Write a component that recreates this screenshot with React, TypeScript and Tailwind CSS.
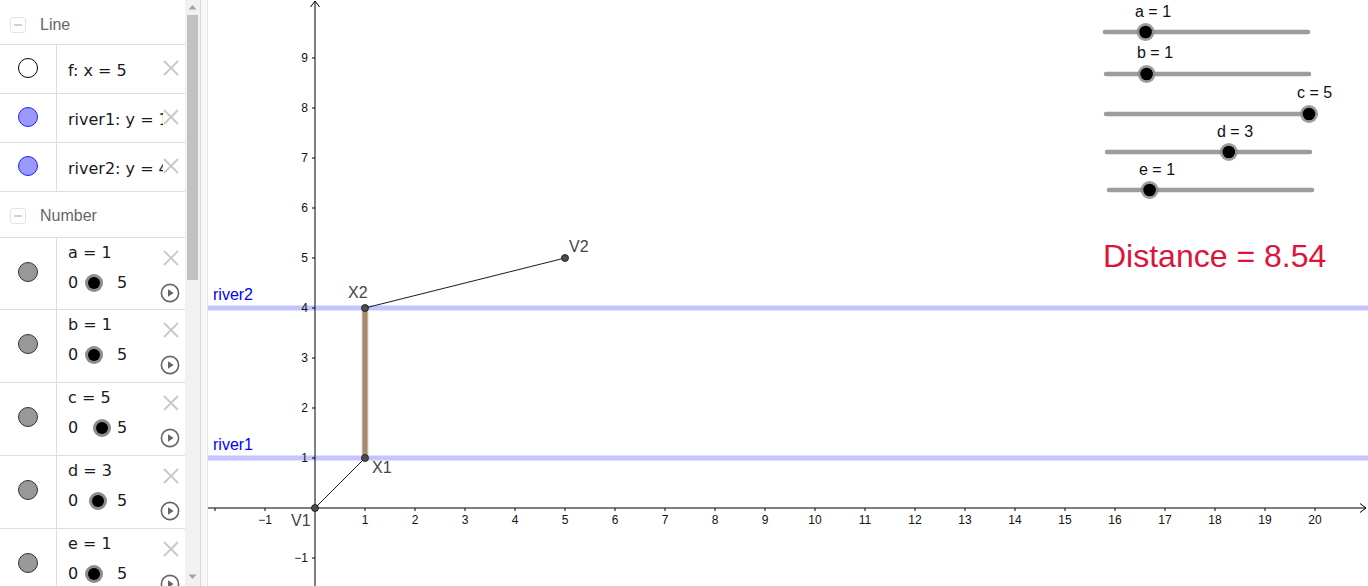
import React from "react";

const DEJAVU = { fontFamily: '"DejaVu Sans", sans-serif' } as const;

function XIcon() {
  return (
    <svg width="16" height="16" viewBox="0 0 16 16">
      <path d="M1 1 L15 15 M15 1 L1 15" stroke="#c8c8c8" strokeWidth="1.8" fill="none" />
    </svg>
  );
}

function PlayIcon() {
  return (
    <svg width="20" height="20" viewBox="0 0 20 20">
      <circle cx="10" cy="10" r="8.6" fill="white" stroke="#666" strokeWidth="1.6" />
      <path d="M8 6.2 L13.6 10 L8 13.8 Z" fill="#666" />
    </svg>
  );
}

function Knob({ size = 18 }: { size?: number }) {
  return (
    <div
      className="flex items-center justify-center rounded-full bg-[#8c8c8c]"
      style={{ width: size, height: size }}
    >
      <div className="h-[12px] w-[12px] rounded-full bg-black" />
    </div>
  );
}

function MinusBox() {
  return (
    <div className="flex h-[16px] w-[16px] items-center justify-center rounded-[3px] border border-[#e3e3e3]">
      <div className="h-[2px] w-[8px] bg-[#d0d0d0]" />
    </div>
  );
}

type LineItem = { label: string; fill: string; stroke: string };
const lines: LineItem[] = [
  { label: "f: x = 5", fill: "#ffffff", stroke: "#000000" },
  { label: "river1: y = 1", fill: "#9999ff", stroke: "#2020ff" },
  { label: "river2: y = 4", fill: "#9999ff", stroke: "#2020ff" },
];

const numbers = [
  { name: "a", value: 1, h: 72 },
  { name: "b", value: 1, h: 73 },
  { name: "c", value: 5, h: 73 },
  { name: "d", value: 3, h: 73 },
  { name: "e", value: 1, h: 73 },
];

function GroupHeader({ title, h, pt }: { title: string; h: number; pt: number }) {
  return (
    <div className="flex items-center gap-[14px] pl-[10px]" style={{ height: h, paddingTop: pt }}>
      <MinusBox />
      <span className="text-[16px] text-[#666666]" style={{ fontFamily: '"Liberation Sans", Arial, sans-serif' }}>
        {title}
      </span>
    </div>
  );
}

function AlgebraPanel() {
  return (
    <div className="flex h-full w-[200px] shrink-0">
      <div className="h-full w-[185px] overflow-hidden bg-white">
        <GroupHeader title="Line" h={44} pt={5} />
        {lines.map((l) => (
          <div key={l.label} className="flex h-[49px] border-t border-[#dddddd]">
            <div className="flex w-[57px] items-center justify-center border-r border-[#dddddd] pb-[3px]">
              <div
                className="h-[20px] w-[20px] rounded-full border"
                style={{ backgroundColor: l.fill, borderColor: l.stroke }}
              />
            </div>
            <div className="relative flex-1">
              <div className="absolute left-[11px] top-[16px] w-[95px] overflow-hidden whitespace-nowrap text-[16px] leading-[20px] text-[#1a1a1a]" style={DEJAVU}>
                {l.label}
              </div>
              <div className="absolute right-[6px] top-[15px]">
                <XIcon />
              </div>
            </div>
          </div>
        ))}
        <div className="border-t border-[#dddddd]">
          <GroupHeader title="Number" h={45} pt={3} />
        </div>
        {numbers.map((n) => (
          <div key={n.name} className="flex border-t border-[#dddddd]" style={{ height: n.h }}>
            <div className="flex w-[57px] items-center justify-center border-r border-[#dddddd] pb-[4px]">
              <div className="h-[20px] w-[20px] rounded-full border border-[#333333] bg-[#999999]" />
            </div>
            <div className="relative flex-1 pl-[11px] text-[16px] text-[#1a1a1a]" style={DEJAVU}>
              <div className="mt-[5px] h-[20px] leading-[20px]">
                {n.name} = {n.value}
              </div>
              <div className="mt-[10px] flex h-[20px] items-center leading-[20px]">
                <span className="w-[11px]">0</span>
                <div className="relative h-[20px] w-[38px]">
                  <div className="absolute top-[1px]" style={{ left: 4.2 + n.value * 1.93 }}>
                    <Knob />
                  </div>
                </div>
                <span>5</span>
              </div>
              <div className="absolute right-[6px] top-[12px]">
                <XIcon />
              </div>
              <div className="absolute right-[5px] top-[45px]">
                <PlayIcon />
              </div>
            </div>
          </div>
        ))}
      </div>
      <div className="flex h-full w-[15px] flex-col items-center bg-[#f1f1f1]">
        <svg width="15" height="15" viewBox="0 0 15 15" className="shrink-0">
          <path d="M3.5 9.5 L7.5 5 L11.5 9.5 Z" fill="#a3a3a3" />
        </svg>
        <div className="h-[265px] w-[11px] bg-[#c1c1c1]" />
        <div className="flex-1" />
        <svg width="15" height="15" viewBox="0 0 15 15" className="mb-[2px] shrink-0">
          <path d="M3.5 5.5 L7.5 10 L11.5 5.5 Z" fill="#a3a3a3" />
        </svg>
      </div>
    </div>
  );
}

const OX = 315;
const OY = 508;
const U = 50;
const px = (x: number) => OX + x * U;
const py = (y: number) => OY - y * U;

const sliders = [
  { name: "a", value: 1, x1: 1105, x2: 1308, y: 32, lx: 1135, ly: 17 },
  { name: "b", value: 1, x1: 1106, x2: 1309, y: 74, lx: 1137, ly: 58 },
  { name: "c", value: 5, x1: 1106, x2: 1309, y: 114, lx: 1297, ly: 98 },
  { name: "d", value: 3, x1: 1107, x2: 1310, y: 152, lx: 1217, ly: 137 },
  { name: "e", value: 1, x1: 1109, x2: 1312, y: 190, lx: 1139, ly: 175 },
];

function Graphics() {
  const xs: number[] = [];
  for (let i = -2; i <= 20; i++) xs.push(i);
  const ys: number[] = [-1, 1, 2, 3, 4, 5, 6, 7, 8, 9];
  const lab = { fontFamily: '"Liberation Sans", Arial, sans-serif' };
  return (
    <div className="relative h-full flex-1 overflow-hidden bg-white">
      <svg width="1160" height="586" viewBox="0 0 1160 586" className="block">
        <g transform="translate(-208 0)" style={lab}>
          {/* rivers */}
          <line x1="208" y1={py(4)} x2="1368" y2={py(4)} stroke="#c4c4ff" strokeWidth="5" />
          <line x1="208" y1={py(1)} x2="1368" y2={py(1)} stroke="#c4c4ff" strokeWidth="5" />
          <text x="213" y="300" fontSize="16" fill="#0000ff">river2</text>
          <text x="213" y="450" fontSize="16" fill="#0000ff">river1</text>

          {/* axes */}
          <line x1="208" y1={OY} x2="1366" y2={OY} stroke="#000" strokeWidth="1" />
          <path d="M1360 503.5 L1366 508 L1360 512.5" stroke="#000" strokeWidth="1" fill="none" />
          <line x1={OX} y1="586" x2={OX} y2="1" stroke="#000" strokeWidth="1" />
          <path d="M310.5 7 L315 1 L319.5 7" stroke="#000" strokeWidth="1" fill="none" />
          {xs.map((i) => (
            <g key={"x" + i}>
              <line x1={px(i)} y1={OY} x2={px(i)} y2={OY + 3} stroke="#000" strokeWidth="1" />
              {i !== 0 && i !== -2 && (
                <text x={px(i)} y={OY + 16} fontSize="12" textAnchor="middle" fill="#111">
                  {i < 0 ? "\u2212" + Math.abs(i) : String(i)}
                </text>
              )}
            </g>
          ))}
          {ys.map((j) => (
            <g key={"y" + j}>
              <line x1={OX - 3} y1={py(j)} x2={OX} y2={py(j)} stroke="#000" strokeWidth="1" />
              <text x={OX - 7} y={py(j) + 4} fontSize="12" textAnchor="end" fill="#111">
                {j < 0 ? "\u2212" + Math.abs(j) : String(j)}
              </text>
            </g>
          ))}

          {/* segments */}
          <line x1={px(1)} y1={py(4)} x2={px(1)} y2={py(1)} stroke="#d8d8d8" strokeWidth="7" />
          <line x1={px(1)} y1={py(4)} x2={px(1)} y2={py(1)} stroke="#a58a6c" strokeWidth="5" />
          <line x1={px(0)} y1={py(0)} x2={px(1)} y2={py(1)} stroke="#000" strokeWidth="0.9" />
          <line x1={px(1)} y1={py(4)} x2={px(5)} y2={py(5)} stroke="#000" strokeWidth="0.9" />

          {/* points */}
          {[
            [0, 0],
            [1, 1],
            [1, 4],
            [5, 5],
          ].map(([x, y]) => (
            <circle key={x + "-" + y} cx={px(x)} cy={py(y)} r="3.5" fill="#4d4d4d" stroke="#111" strokeWidth="0.8" />
          ))}
          <text x="348" y="298" fontSize="16" fill="#444">X2</text>
          <text x="372" y="473" fontSize="16" fill="#444">X1</text>
          <text x="569" y="252" fontSize="16" fill="#444">V2</text>
          <text x="291" y="526" fontSize="16" fill="#444">V1</text>

          {/* sliders */}
          {sliders.map((s) => {
            const kx = s.x1 + ((s.x2 - s.x1) * s.value) / 5;
            return (
              <g key={s.name}>
                <line x1={s.x1} y1={s.y} x2={s.x2} y2={s.y} stroke="#9c9c9c" strokeWidth="4.5" strokeLinecap="round" />
                <circle cx={kx} cy={s.y} r="9" fill="#8c8c8c" fillOpacity="0.85" />
                <circle cx={kx} cy={s.y} r="6.3" fill="#000" />
                <text x={s.lx} y={s.ly} fontSize="16" fill="#111">
                  {s.name} = {s.value}
                </text>
              </g>
            );
          })}

          <text x="1103" y="267" fontSize="32" fill="#dc143c">Distance = 8.54</text>
        </g>
      </svg>
    </div>
  );
}

export default function App() {
  return (
    <div className="flex h-[586px] w-[1368px] overflow-hidden bg-white">
      <AlgebraPanel />
      <div className="h-full w-[8px] shrink-0 border-l border-r border-l-[#d6d6d6] border-r-[#e6e6e6] bg-[#f7f7f7]" />
      <Graphics />
    </div>
  );
}
